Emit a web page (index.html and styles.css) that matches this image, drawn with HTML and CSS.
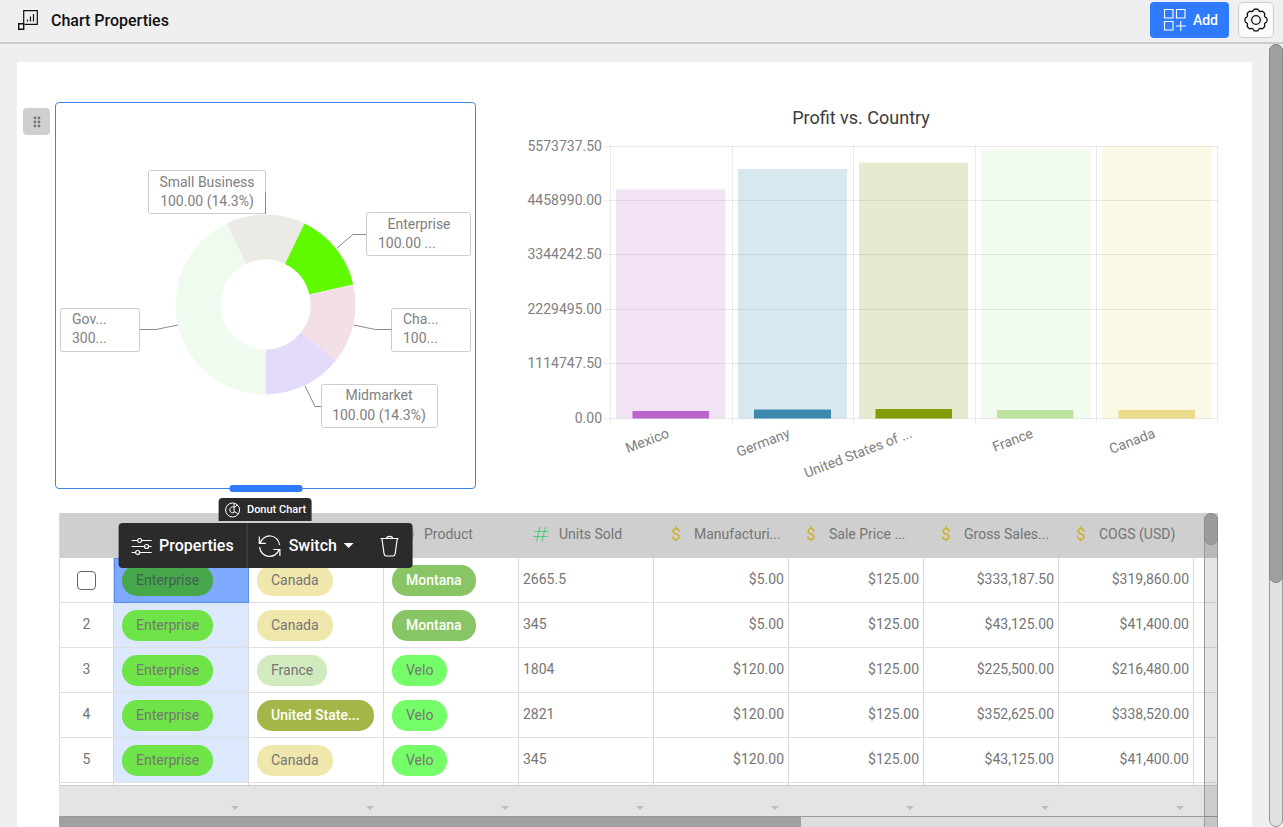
FILE: index.html
```html
<!DOCTYPE html>
<html lang="en">
<head>
    <meta charset="UTF-8">
    <meta name="viewport" content="width=device-width, initial-scale=1.0">
    <title>Chart Properties</title>
    <link rel="stylesheet" href="styles.css">
</head>
<body>

<header class="topbar">
    <svg class="logo" width="20" height="20" viewBox="0 0 20 20" fill="none" stroke="#111">
        <path stroke-width="1.2" d="M5.700 13V.7h13.600v13.600H6.500"/>
        <path stroke-width="1.4" d="M.7 13.700h5v5.600h-5z"/>
        <path stroke-width="1.2" d="M9.500 11.500v-2M12.500 11.500V6.500M15.500 11.500V4"/>
    </svg>
    <h1>Chart Properties</h1>
    <button class="btn-add" type="button">
        <svg width="24" height="24" viewBox="0 0 24 24" fill="none" stroke="#fff" stroke-width="1.1">
            <path d="M1.500 1.500h8.500v8.500h-8.500zM13.500 1.500H22v8.500h-8.500zM1.500 13.500h8.500V22h-8.500zM17.800 13v10M13 18h10"/>
        </svg>
        Add
    </button>
    <button class="btn-settings" type="button" aria-label="Settings">
        <svg width="24" height="24" viewBox="0 0 24 24" fill="none" stroke="#111" stroke-width="1.3" stroke-linejoin="round">
            <path d="M9.940 1.400A6 6 0 0 1 14.060 1.400A2.600 2.600 0 0 0 18.040 3.050A6 6 0 0 1 20.950 5.960A2.600 2.600 0 0 0 22.600 9.940A6 6 0 0 1 22.600 14.060A2.600 2.600 0 0 0 20.950 18.040A6 6 0 0 1 18.040 20.950A2.600 2.600 0 0 0 14.060 22.600A6 6 0 0 1 9.940 22.600A2.600 2.600 0 0 0 5.960 20.950A6 6 0 0 1 3.050 18.040A2.600 2.600 0 0 0 1.400 14.060A6 6 0 0 1 1.400 9.940A2.600 2.600 0 0 0 3.050 5.960A6 6 0 0 1 5.960 3.050A2.600 2.600 0 0 0 9.940 1.400z"/>
            <circle cx="12" cy="12" r="4.300"/>
        </svg>
    </button>
</header>

<main class="workspace">
    <div class="board-wrap">
        <div class="board">

            <div class="charts">
                <button class="drag-handle" type="button" aria-label="Move">
                    <svg width="10" height="12" viewBox="0 0 10 12" fill="#777">
                        <circle cx="3" cy="2" r="1.400"/><circle cx="7" cy="2" r="1.400"/>
                        <circle cx="3" cy="6" r="1.400"/><circle cx="7" cy="6" r="1.400"/>
                        <circle cx="3" cy="10" r="1.400"/><circle cx="7" cy="10" r="1.400"/>
                    </svg>
                </button>

                <section class="widget selected">
                    <svg class="chart" viewBox="0 0 419 385">
                        <!-- slices, clockwise from the top -->
                        <g transform="translate(209.5 201.5)">
                            <path fill="#ebeae5" d="M-39.050-81.090A90 90 0 0 1 39.050-81.090L19.520-40.540A45 45 0 0 0-19.520-40.540z"/>
                            <path fill="#5ffa00" d="M39.050-81.090A90 90 0 0 1 87.740-20.030L43.870-10.010A45 45 0 0 0 19.520-40.540z"/>
                            <path fill="#f2e0e6" d="M87.740-20.030A90 90 0 0 1 70.360 56.110L35.180 28.060A45 45 0 0 0 43.870-10.010z"/>
                            <path fill="#e4dafa" d="M70.360 56.110A90 90 0 0 1 0 90V45A45 45 0 0 0 35.180 28.060z"/>
                            <path fill="#f0fbf0" d="M0 90A90 90 0 0 1-39.050-81.090L-19.520-40.540A45 45 0 0 0 0 45z"/>
                        </g>
                        <g class="label-box">
                            <rect x="92.500" y="67.500" width="117" height="43" rx="2"/>
                            <rect x="310.500" y="109.500" width="104" height="43" rx="2"/>
                            <rect x="335.500" y="205.500" width="79" height="43" rx="2"/>
                            <rect x="265.500" y="281.500" width="116" height="43" rx="2"/>
                            <rect x="4.500" y="205.500" width="79" height="43" rx="2"/>
                        </g>
                        <g class="leader">
                            <path d="M209.500 89v22"/>
                            <path d="M281 145l16-13.500h13"/>
                            <path d="M297.500 222l22 4.500h16"/>
                            <path d="M249 283l10 20.500h6"/>
                            <path d="M122 222l-22 4.500H84"/>
                        </g>
                        <g class="chart-text">
                            <text class="mid" x="151" y="84">Small Business</text>
                            <text class="mid" x="151" y="103">100.00 (14.3%)</text>
                            <text class="mid" x="363" y="126">Enterprise</text>
                            <text x="322" y="145">100.00 ...</text>
                            <text x="347" y="221">Cha...</text>
                            <text x="347" y="240">100...</text>
                            <text class="mid" x="323" y="297">Midmarket</text>
                            <text class="mid" x="323" y="317">100.00 (14.3%)</text>
                            <text x="16" y="221">Gov...</text>
                            <text x="16" y="240">300...</text>
                        </g>
                    </svg>
                    <span class="resize-grip"></span>
                    <div class="popup">
                        <div class="popup-tag">
                            <svg width="16" height="16" viewBox="0 0 16 16" fill="none" stroke="#fff">
                                <circle cx="8" cy="8" r="7"/>
                                <path d="M9.500 5.200A3 3 0 1 0 9.800 10.400M9.500 1.500v9M9.800 5.500l3-2.700M10 9.500l3.300 2.300"/>
                            </svg>
                            Donut Chart
                        </div>
                        <div class="popup-bar">
                            <button class="popup-props" type="button">
                                <svg width="22" height="20" viewBox="0 0 22 20" fill="none" stroke="#fff" stroke-width="1.200">
                                    <path d="M1 4.500h6M11 4.500h10M1 10.500h13M18 10.500h3M1 16.500h4M9 16.500h12"/>
                                    <circle cx="9" cy="4.500" r="2"/><circle cx="16" cy="10.500" r="2"/><circle cx="7" cy="16.500" r="2"/>
                                </svg>
                                Properties
                            </button>
                            <button class="popup-switch" type="button">
                                <svg width="24" height="24" viewBox="0 0 24 24" fill="none" stroke="#fff" stroke-width="1.200">
                                    <path d="M2.500 9A10 10 0 0 1 22 11M1.700 2.500v6.800h6.500M21.500 15.500A10 10 0 0 1 2 13M22.300 22v-6.500h-6.500"/>
                                </svg>
                                Switch
                                <span class="caret"></span>
                            </button>
                            <button class="popup-delete" type="button" aria-label="Delete">
                                <svg width="20" height="22" viewBox="0 0 20 22" fill="none" stroke="#fff" stroke-width="1.200">
                                    <path d="M1 3.500h18M7 3.500a3 2.200 0 0 1 6 0M2.300 3.500l2.200 15.500q.3 2 2.300 2h6.400q2 0 2.300-2l2.200-15.500"/>
                                </svg>
                            </button>
                        </div>
                    </div>
                </section>

                <section class="widget">
                    <svg class="chart" viewBox="0 0 715 387">
                        <text class="chart-title" x="358" y="22">Profit vs. Country</text>
                        <g>
                            <rect x="113" y="87.500" width="109.500" height="229" fill="#f1e3f5"/>
                            <rect x="235" y="67" width="109" height="249.500" fill="#d8e8f1"/>
                            <rect x="356" y="60.500" width="109" height="256" fill="#e5ead0"/>
                            <rect x="478" y="47.500" width="109" height="269" fill="#f2fbef"/>
                            <rect x="599" y="44" width="109.500" height="272.500" fill="#fcf8e6"/>
                        </g>
                        <path class="gridline" d="M101 44.500h614M101 98.500h614M101 152.500h614M101 207.500h614M101 261.500h614M101 316.500h614M107.500 44v277M229.500 44v277M350.500 44v277M472.500 44v277M593.500 44v277M714.500 44v277"/>
                        <g>
                            <rect x="129.500" y="309" width="76.500" height="7.500" fill="#b966cb"/>
                            <rect x="251" y="307.500" width="77" height="9" fill="#3c89ad"/>
                            <rect x="372.500" y="307" width="76.500" height="9.500" fill="#829c00"/>
                            <rect x="494" y="308" width="76.500" height="8.500" fill="#bee3a1"/>
                            <rect x="615.500" y="308" width="76.500" height="8.500" fill="#eadc8b"/>
                        </g>
                        <g class="chart-text end">
                            <text x="99" y="49">5573737.50</text>
                            <text x="99" y="103">4458990.00</text>
                            <text x="99" y="157">3344242.50</text>
                            <text x="99" y="212">2229495.00</text>
                            <text x="99" y="266">1114747.50</text>
                            <text x="99" y="321">0.00</text>
                            <text transform="translate(167 335) rotate(-21)">Mexico</text>
                            <text transform="translate(288 335) rotate(-21)">Germany</text>
                            <text transform="translate(410 335) rotate(-21)">United States of ...</text>
                            <text transform="translate(531 335) rotate(-21)">France</text>
                            <text transform="translate(653 335) rotate(-21)">Canada</text>
                        </g>
                    </svg>
                </section>
            </div>

            <section class="sheet">
                <div class="sheet-view">
                    <table>
                        <colgroup><col class="col-num"><col span="9" class="col-data"></colgroup>
                        <thead>
                            <tr>
                                <th></th>
                                <th></th>
                                <th></th>
                                <th><div class="head"><svg width="16" height="16" viewBox="0 0 16 16" fill="none" stroke="#99a"><circle cx="8" cy="8" r="7.500"/><path d="M5 7l3 3 3-3"/></svg>Product</div></th>
                                <th><div class="head"><svg width="16" height="16" viewBox="0 0 16 16" fill="none" stroke="#4dc97c"><path d="M1.500 5.500h14M.5 10.500h14M7 1L3.500 15.500M12.500 1L9 15.500"/></svg>Units Sold</div></th>
                                <th><div class="head"><span class="dollar">$</span>Manufacturi...</div></th>
                                <th><div class="head"><span class="dollar">$</span>Sale Price ...</div></th>
                                <th><div class="head"><span class="dollar">$</span>Gross Sales...</div></th>
                                <th><div class="head"><span class="dollar">$</span>COGS (USD)</div></th>
                                <th></th>
                            </tr>
                        </thead>
                        <tbody>
                            <tr>
                                <td class="num"><input type="checkbox" aria-label="Select row 1"></td>
                                <td class="tag active"><span class="pill enterprise">Enterprise</span></td>
                                <td class="tag"><span class="pill canada">Canada</span></td>
                                <td class="tag"><span class="pill montana">Montana</span></td>
                                <td>2665.5</td>
                                <td class="money">$5.00</td>
                                <td class="money">$125.00</td>
                                <td class="money">$333,187.50</td>
                                <td class="money">$319,860.00</td>
                                <td></td>
                            </tr>
                            <tr>
                                <td class="num">2</td>
                                <td class="tag picked"><span class="pill enterprise">Enterprise</span></td>
                                <td class="tag"><span class="pill canada">Canada</span></td>
                                <td class="tag"><span class="pill montana">Montana</span></td>
                                <td>345</td>
                                <td class="money">$5.00</td>
                                <td class="money">$125.00</td>
                                <td class="money">$43,125.00</td>
                                <td class="money">$41,400.00</td>
                                <td></td>
                            </tr>
                            <tr>
                                <td class="num">3</td>
                                <td class="tag picked"><span class="pill enterprise">Enterprise</span></td>
                                <td class="tag"><span class="pill france">France</span></td>
                                <td class="tag"><span class="pill velo">Velo</span></td>
                                <td>1804</td>
                                <td class="money">$120.00</td>
                                <td class="money">$125.00</td>
                                <td class="money">$225,500.00</td>
                                <td class="money">$216,480.00</td>
                                <td></td>
                            </tr>
                            <tr>
                                <td class="num">4</td>
                                <td class="tag picked"><span class="pill enterprise">Enterprise</span></td>
                                <td class="tag"><span class="pill usa">United State...</span></td>
                                <td class="tag"><span class="pill velo">Velo</span></td>
                                <td>2821</td>
                                <td class="money">$120.00</td>
                                <td class="money">$125.00</td>
                                <td class="money">$352,625.00</td>
                                <td class="money">$338,520.00</td>
                                <td></td>
                            </tr>
                            <tr>
                                <td class="num">5</td>
                                <td class="tag picked"><span class="pill enterprise">Enterprise</span></td>
                                <td class="tag"><span class="pill canada">Canada</span></td>
                                <td class="tag"><span class="pill velo">Velo</span></td>
                                <td>345</td>
                                <td class="money">$120.00</td>
                                <td class="money">$125.00</td>
                                <td class="money">$43,125.00</td>
                                <td class="money">$41,400.00</td>
                                <td></td>
                            </tr>
                            <tr>
                                <td></td><td></td><td></td><td></td><td></td>
                                <td></td><td></td><td></td><td></td><td></td>
                            </tr>
                        </tbody>
                    </table>
                </div>
                <div class="summary">
                    <span></span>
                    <span class="cell"></span>
                    <span class="cell"></span>
                    <span class="cell"></span>
                    <span class="cell"></span>
                    <span class="cell"></span>
                    <span class="cell"></span>
                    <span class="cell"></span>
                    <span class="cell"></span>
                </div>
                <div class="scroll-x"><div class="scroll-x-thumb"></div></div>
                <div class="scroll-y"><div class="scroll-y-thumb"></div></div>
            </section>

        </div>
    </div>
    <div class="page-scroll"><div class="page-scroll-thumb"></div></div>
</main>

</body>
</html>
```
FILE: styles.css
```css
* {
    box-sizing: border-box;
}
body {
    font-family: Roboto, Arial, sans-serif;
    font-size: 14px;
    background-color: #efefef;
    color: #757575;
    margin: 0;
    height: 100vh;
    display: flex;
    flex-direction: column;
    overflow: hidden;
}
button {
    font-family: inherit;
    cursor: pointer;
    border: none;
    padding: 0;
    display: flex;
    align-items: center;
    justify-content: center;
}

/* Top bar */
.topbar {
    display: flex;
    align-items: center;
    padding: 2px 9px 4px 18px;
    border-bottom: 2px solid #cccccc;
}
.topbar h1 {
    font-size: 16px;
    font-weight: 500;
    color: #111;
    margin: 0 auto 0 13px;
}
.btn-add {
    height: 36px;
    padding: 0 11px 0 13px;
    gap: 6px;
    background: #2f7bff;
    color: white;
    font-size: 14px;
    font-weight: 500;
    border-radius: 4px;
}
.btn-settings {
    width: 36px;
    height: 36px;
    margin-left: 9px;
    background: #fafafa;
    border: 1px solid #cfcfcf;
    border-radius: 5px;
}

/* Workspace */
.workspace {
    flex: 1;
    min-height: 0;
    display: flex;
}
.board-wrap {
    flex: 1;
    min-width: 0;
    display: flex;
    padding: 18px 17px 0;
}
.board {
    flex: 1;
    min-width: 0;
    display: flex;
    flex-direction: column;
    background: white;
    padding: 40px 34px 0 6px;
}
.page-scroll {
    width: 14px;
    background: #e0e0e0;
    border: 1px solid #999;
    border-radius: 7px;
}
.page-scroll-thumb {
    height: 69%;
    margin: -1px;
    background: #a0a0a0;
    border: 1px solid #8a8a8a;
    border-radius: 7px;
}

/* Charts */
.charts {
    display: grid;
    grid-template-columns: 27px 426fr 742fr;
    align-items: start;
}
.drag-handle {
    height: 27px;
    margin-top: 6px;
    background: #cfcfcf;
    border-radius: 4px;
}
.widget {
    position: relative;
    margin-left: 27px;
}
.widget.selected {
    margin-left: 5px;
    border: 1px solid #3f83e6;
    border-radius: 4px;
}
.chart {
    display: block;
    width: 100%;
}
.chart-text {
    font-size: 14px;
    fill: #808080;
}
.mid {
    text-anchor: middle;
}
.end {
    text-anchor: end;
}
.chart-title {
    font-size: 18px;
    fill: #3c3c3c;
    text-anchor: middle;
}
.label-box {
    fill: white;
    stroke: #cccccc;
}
.leader {
    fill: none;
    stroke: #8a8a8a;
}
.gridline {
    fill: none;
    stroke: rgba(0, 0, 0, 0.08);
}
.resize-grip {
    position: absolute;
    left: 50%;
    bottom: -4px;
    width: 73px;
    height: 7px;
    transform: translateX(-50%);
    background: #2f7bff;
    border-radius: 3px;
}

/* Popup toolbar of the selected chart */
.popup {
    position: absolute;
    top: 100%;
    left: 50%;
    transform: translateX(-50%);
    margin-top: 10px;
    z-index: 2;
    display: flex;
    flex-direction: column;
    align-items: center;
    gap: 2px;
    color: white;
}
.popup-tag {
    display: flex;
    align-items: center;
    gap: 6px;
    height: 23px;
    padding: 0 6px;
    background: #2b2b2b;
    border-radius: 4px 4px 0 0;
    font-size: 11px;
    font-weight: 500;
    white-space: nowrap;
}
.popup-bar {
    display: flex;
    height: 45px;
    background: #2b2b2b;
    border-radius: 4px;
}
.popup-bar button {
    background: none;
    color: white;
    font-size: 16px;
    font-weight: 500;
}
.popup-bar .popup-props {
    gap: 7px;
    padding: 0 13px 0 12px;
    border-right: 1px solid #4a4a4a;
}
.popup-bar .popup-switch {
    gap: 7px;
    padding: 0 26px 0 10px;
}
.popup-bar .popup-delete {
    padding-right: 13px;
}
.caret {
    border: 5px solid transparent;
    border-top-color: white;
    border-bottom: none;
}

/* Data sheet */
.sheet {
    position: relative;
    flex: 1;
    min-height: 0;
    display: flex;
    flex-direction: column;
    margin: 24px 0 0 36px;
}
.sheet-view {
    flex: 1;
    min-height: 0;
    overflow: hidden;
    border-left: 1px solid #d9d9d9;
}
table {
    table-layout: fixed;
    width: 1269px;
    border-collapse: separate;
    border-spacing: 0;
}
.col-num {
    width: 54px;
}
.col-data {
    width: 135px;
}
th {
    height: 45px;
    padding: 0;
    background: #cfcfcf;
    font-weight: 400;
    text-align: left;
}
.head {
    display: flex;
    align-items: center;
    gap: 10px;
    padding: 0 0 3px 14px;
}
.dollar {
    width: 16px;
    color: #cdb01c;
    font-size: 17px;
    text-align: center;
}
td {
    height: 45px;
    padding: 0 4px 2px;
    border-right: 1px solid #d9d9d9;
    border-bottom: 1px solid #e0e0e0;
}
.num {
    text-align: center;
}
.money {
    text-align: right;
}
.tag {
    padding: 1px 9px 0 8px;
}
.picked {
    background: #dce8fe;
}
.active {
    background: #7da9ff;
    border: 1px solid #5a8cea;
    padding-top: 0;
    padding-left: 7px;
}
input[type="checkbox"] {
    appearance: none;
    display: block;
    width: 19px;
    height: 19px;
    margin: 2px auto 0;
    background: white;
    border: 1px solid #666;
    border-radius: 4px;
}
.pill {
    display: block;
    width: fit-content;
    max-width: 100%;
    padding: 0 14px;
    line-height: 31px;
    border-radius: 15px;
    white-space: nowrap;
}
.enterprise {
    background: #6ee449;
}
.active .enterprise {
    background: #47a74b;
    color: #3f6152;
}
.canada {
    background: #f0e7ad;
}
.france {
    background: #d1ebbf;
}
.velo {
    background: #74fd68;
}
.montana,
.usa {
    color: white;
    font-weight: 500;
}
.montana {
    background: #88c665;
}
.usa {
    width: 100%;
    background: #a5b648;
}
.summary {
    display: grid;
    grid-template-columns: 55px repeat(8, 135px);
    height: 31px;
    background: #e4e4e4;
    border-top: 1px solid #cccccc;
    overflow: hidden;
}
.summary .cell {
    display: flex;
    align-items: flex-end;
    justify-content: flex-end;
    padding: 0 10px 6px 0;
}
.summary .cell::after {
    content: "";
    border: 4px solid transparent;
    border-top-color: #bdbdbd;
    border-bottom: none;
}
.scroll-x {
    height: 11px;
    background: #dddddd;
    border-top: 1px solid #999;
}
.scroll-x-thumb {
    width: 64%;
    height: 100%;
    background: #a0a0a0;
}
.scroll-y {
    position: absolute;
    top: 0;
    right: 0;
    bottom: 0;
    width: 14px;
    background: rgba(0, 0, 0, 0.1);
    border: solid #999;
    border-width: 0 1px;
    border-radius: 7px 7px 0 0;
}
.scroll-y-thumb {
    height: 32px;
    margin: 0 -1px;
    background: #9c9c9c;
    border: 1px solid #8a8a8a;
    border-radius: 7px;
}
```
